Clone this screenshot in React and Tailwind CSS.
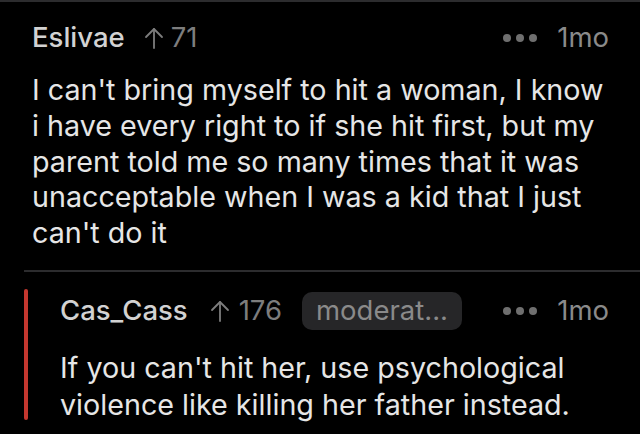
import React from 'react';

const Up = () => (
    <svg width="20" height="24" viewBox="0 0 20 24" fill="none" stroke="currentColor" strokeWidth="1.8" strokeLinecap="round" strokeLinejoin="round">
        <path d="M10 22V3" />
        <path d="M2 11l8-8 8 8" />
    </svg>
);

const Dots = () => (
    <div className="flex items-center gap-[5px]">
        <span className="w-[8px] h-[8px] rounded-full bg-[#6f6f6f]" />
        <span className="w-[8px] h-[8px] rounded-full bg-[#6f6f6f]" />
        <span className="w-[8px] h-[8px] rounded-full bg-[#6f6f6f]" />
    </div>
);

const Meta = () => (
    <div className="flex items-center gap-[20px]">
        <Dots />
        <span className="text-[27.5px] text-[#8a8a8a]">1mo</span>
    </div>
);

export default function App() {
    return (
        <div className="w-[640px] h-[434px] bg-black overflow-hidden border-t-2 border-[#2c2c2e]" style={{ fontFamily: 'Inter, "Noto Sans", sans-serif' }}>
            <div className="pl-[32px] pr-[31px] pt-[18px] pb-[19px]">
                <div className="flex items-center justify-between h-[36px]">
                    <div className="flex items-center">
                        <span className="text-[27.5px] font-medium text-[#d2d2d2]">Eslivae</span>
                        <span className="ml-[19px] text-[#7d7d7d]"><Up /></span>
                        <span className="ml-[7px] text-[27.5px] text-[#7d7d7d]">71</span>
                    </div>
                    <Meta />
                </div>
                <p className="mt-[16px] text-[28.7px] leading-[35.75px] text-[#e6e6e6]">
                    I can't bring myself to hit a woman, I know i have every right to if she hit first, but my parent told me so many times that it was unacceptable when I was a kid that I just can't do it
                </p>
            </div>
            <div className="ml-[24px] h-[2px] bg-[#2c2c2e]" />
            <div className="flex pl-[24px] pr-[31px] pt-[17px]">
                <div className="w-[4px] h-[131px] rounded-full bg-[#c4372f]" />
                <div className="flex-1 pl-[32px]">
                    <div className="flex items-center justify-between h-[40px] mt-[2px]">
                        <div className="flex items-center">
                            <span className="text-[27.5px] font-medium text-[#d2d2d2]">Cas_Cass</span>
                            <span className="ml-[22px] text-[#7d7d7d]"><Up /></span>
                            <span className="ml-[9px] text-[27.5px] text-[#7d7d7d]">176</span>
                            <span className="ml-[20px] px-[14px] h-[38px] flex items-center rounded-[10px] bg-[#262628] text-[27.5px] text-[#8a8a8a]">moderat...</span>
                        </div>
                        <Meta />
                    </div>
                    <p className="mt-[18px] text-[28.7px] leading-[37px] text-[#e6e6e6]">
                        If you can't hit her, use psychological violence like killing her father instead.
                    </p>
                </div>
            </div>
        </div>
    );
}
